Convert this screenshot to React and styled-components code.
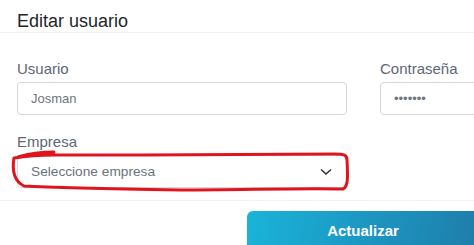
import React from "react";
import styled, { createGlobalStyle } from "styled-components";

const Global = createGlobalStyle`
  html, body { margin: 0; padding: 0; background: #fff; overflow: hidden; }
  body { font-family: "Liberation Sans", Arial, sans-serif; }
`;

const Page = styled.div`
  position: relative;
  width: 474px;
  height: 245px;
  overflow: hidden;
  background: #fff;
`;

const Header = styled.div`
  width: 760px;
  height: 33px;
  box-sizing: border-box;
  padding: 11px 17px 0;
  border-bottom: 1px solid #eef0f2;
`;

const Title = styled.h5`
  margin: 0;
  font-size: 18px;
  line-height: 21px;
  font-weight: 400;
  color: #212529;
`;

const Body = styled.div`
  padding: 27px 17px 12px;
  display: flex;
  flex-direction: column;
  gap: 18px;
`;

const Row = styled.div`
  display: grid;
  grid-template-columns: 330px 330px;
  column-gap: 33px;
`;

const Field = styled.div`
  display: flex;
  flex-direction: column;
  gap: 4px;
  width: 330px;
`;

const Label = styled.label`
  font-size: 15px;
  line-height: 18px;
  color: #5d6678;
`;

const Input = styled.input`
  box-sizing: border-box;
  height: 33px;
  width: 100%;
  border: 1px solid #d4d7dc;
  border-radius: 4px;
  padding: 0 13px;
  font-family: "Liberation Sans", Arial, sans-serif;
  font-size: 13px;
  color: #6f757c;
  background: #fff;
  outline: none;
`;

const Select = styled.div`
  box-sizing: border-box;
  height: 33px;
  width: 330px;
  border: 1px solid #d4d7dc;
  border-radius: 4px;
  padding: 0 14px 0 13px;
  display: flex;
  align-items: center;
  justify-content: space-between;
  font-size: 13.7px;
  color: #6c727b;
`;

const Footer = styled.div`
  width: 760px;
  border-top: 1px solid #eef0f2;
  padding: 10px 0 0 247px;
`;

const Button = styled.button`
  width: 232px;
  height: 44px;
  border: none;
  border-radius: 6px;
  background: linear-gradient(100deg, #1ab4d9 0%, #1c97c2 50%, #1f7daa 100%);
  color: #fff;
  font-family: "Liberation Sans", Arial, sans-serif;
  font-weight: 700;
  font-size: 15px;
  padding: 0 0 6px;
`;

const Annotation = styled.svg`
  position: absolute;
  left: 0;
  top: 0;
  pointer-events: none;
`;

export default function App() {
  return (
    <Page>
      <Global />
      <Header>
        <Title>Editar usuario</Title>
      </Header>
      <Body>
        <Row>
          <Field>
            <Label>Usuario</Label>
            <Input readOnly value="Josman" />
          </Field>
          <Field>
            <Label>Contraseña</Label>
            <Input type="password" readOnly value="1234567" />
          </Field>
        </Row>
        <Field>
          <Label>Empresa</Label>
          <Select>
            <span>Seleccione empresa</span>
            <svg width="12" height="8" viewBox="0 0 12 8">
              <path d="M1 1.5 L6 6 L11 1.5" fill="none" stroke="#333" strokeWidth="1.6" />
            </svg>
          </Select>
        </Field>
      </Body>
      <Footer>
        <Button>Actualizar</Button>
      </Footer>
      <Annotation width="474" height="245" viewBox="0 0 474 245">
        <path
          d="M18 157 C 28 154, 42 152, 54 152 M 14 158 C 12 170, 14 181, 24 186 C 60 188, 120 189, 180 190 C 240 190, 300 188, 343 189 C 348 187, 348 178, 347 160 C 347 155, 344 154, 335 154 C 260 155, 150 155, 55 155 C 40 155, 26 156, 14 158"
          fill="none"
          stroke="#e0141d"
          strokeWidth="3"
          strokeLinecap="round"
          strokeLinejoin="round"
        />
      </Annotation>
    </Page>
  );
}
